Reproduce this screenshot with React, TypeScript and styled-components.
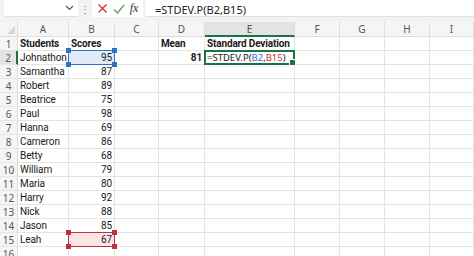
import React from "react";
import styled, { createGlobalStyle, css } from "styled-components";

const Global = createGlobalStyle`
  html, body { margin: 0; padding: 0; background: #ffffff; }
  body { font-family: "Noto Sans", "Open Sans", sans-serif; overflow: hidden; }
`;

const Page = styled.div`
  width: 474px;
  height: 256px;
  overflow: hidden;
  background: #ffffff;
`;

const FormulaBar = styled.div`
  display: flex;
  align-items: flex-start;
  height: 22px;
  background: #f3f3f3;
  box-sizing: border-box;
`;

const NameBox = styled.div`
  width: 74px;
  height: 17px;
  margin-left: 4px;
  background: #ffffff;
  border-bottom: 1px solid #e0e0e0;
  box-sizing: border-box;
  display: flex;
  align-items: center;
  justify-content: flex-end;
  padding-right: 4px;
  color: #444;
`;

const Dots = styled.div`
  width: 14px;
  height: 17px;
  display: flex;
  align-items: center;
  justify-content: center;
  color: #777;
  font-size: 10px;
`;

const ActionBox = styled.div`
  width: 51px;
  height: 17px;
  background: #ffffff;
  display: flex;
  align-items: center;
  justify-content: space-around;
  padding: 0 2px;
  box-sizing: border-box;
`;

const Fx = styled.span`
  font-family: "Liberation Serif", serif;
  font-style: italic;
  font-size: 12px;
  color: #333;
`;

const FormulaInput = styled.div`
  flex: 1;
  height: 17px;
  margin-left: 3px;
  background: #ffffff;
  border-bottom: 1px solid #e0e0e0;
  box-sizing: border-box;
  padding-left: 9px;
  line-height: 16px;
  color: #222;
`;

const FormulaText = styled.span<{ $size: number }>`
  font-family: "Noto Sans", sans-serif;
  font-size: ${({ $size }) => $size}px;
  font-weight: 400;
  letter-spacing: 0;
`;

const Sheet = styled.div`
  display: grid;
  grid-template-columns: 18px 51px 46px 44px 46px 90px 45px 45px 45px 44px;
  grid-auto-rows: 14px;
  grid-template-rows: 15px;
`;

const ColHead = styled.div<{ $active?: boolean }>`
  background: ${({ $active }) => ($active ? "#e3e3e3" : "#f5f5f5")};
  border-right: 1px solid #dddddd;
  border-bottom: ${({ $active }) => ($active ? "2px solid #1e7145" : "1px solid #dddddd")};
  box-sizing: border-box;
  display: flex;
  align-items: center;
  justify-content: center;
  font-size: 10px;
  color: #555;
`;

const Corner = styled.div`
  background: #f5f5f5;
  border-right: 1px solid #dddddd;
  border-bottom: 1px solid #dddddd;
  box-sizing: border-box;
  position: relative;
  &::after {
    content: "";
    position: absolute;
    right: 2px;
    bottom: 2px;
    border-left: 8px solid transparent;
    border-bottom: 8px solid #d6d6d6;
  }
`;

const RowHead = styled.div<{ $active?: boolean }>`
  background: ${({ $active }) => ($active ? "#e3e3e3" : "#f5f5f5")};
  border-right: ${({ $active }) => ($active ? "2px solid #1e7145" : "1px solid #dddddd")};
  border-bottom: 1px solid #e6e6e6;
  box-sizing: border-box;
  display: flex;
  align-items: center;
  justify-content: center;
  font-size: 10px;
  color: #555;
`;

type Mark = "blue" | "red" | "green" | undefined;

const markColor = { blue: "#2f72c4", red: "#c0303c", green: "#1e7145" };
const markFill = { blue: "#e2ecf8", red: "#fbe5e6", green: "#ffffff" };

const Cell = styled.div<{ $right?: boolean; $bold?: boolean; $mark?: Mark }>`
  position: relative;
  border-right: 1px solid #e4e4e4;
  border-bottom: 1px solid #e4e4e4;
  box-sizing: border-box;
  padding: 0 2px;
  font-family: Roboto, "Noto Sans", sans-serif;
  font-size: 10px;
  line-height: 13px;
  color: #1a1a1a;
  white-space: nowrap;
  text-align: ${({ $right }) => ($right ? "right" : "left")};
  font-weight: ${({ $bold }) => ($bold ? 700 : 400)};
  letter-spacing: ${({ $bold }) => ($bold ? "-0.15px" : "-0.1px")};
  ${({ $mark }) =>
    $mark &&
    css`
      background: ${markFill[$mark]};
      z-index: 1;
    `}
`;

const Outline = styled.div<{ $mark: "blue" | "red" | "green" }>`
  position: absolute;
  left: -1px;
  top: -1px;
  right: -1px;
  bottom: -1px;
  border: ${({ $mark }) => ($mark === "green" ? 2 : 1)}px solid ${({ $mark }) => markColor[$mark]};
  pointer-events: none;
`;

const Handle = styled.span<{ $mark: "blue" | "red" | "green"; $x: "l" | "r"; $y: "t" | "b" }>`
  position: absolute;
  width: 5px;
  height: 5px;
  background: ${({ $mark }) => markColor[$mark]};
  ${({ $x }) => ($x === "l" ? "left: -3px;" : "right: -3px;")}
  ${({ $y }) => ($y === "t" ? "top: -3px;" : "bottom: -3px;")}
  ${({ $mark }) => ($mark === "green" ? "border: 1px solid #fff;" : "")}
`;

const Ref = styled.span<{ $c: string }>`
  color: ${({ $c }) => $c};
`;

const columns = ["A", "B", "C", "D", "E", "F", "G", "H", "I"];

const students: [string, number][] = [
  ["Johnathon", 95],
  ["Samantha", 87],
  ["Robert", 89],
  ["Beatrice", 75],
  ["Paul", 98],
  ["Hanna", 69],
  ["Cameron", 86],
  ["Betty", 68],
  ["William", 79],
  ["Maria", 80],
  ["Harry", 92],
  ["Nick", 88],
  ["Jason", 85],
  ["Leah", 67],
];

const Formula = () => (
  <FormulaText $size={9.5}>
    =STDEV.P(<Ref $c="#2f72c4">B2</Ref>,<Ref $c="#c0303c">B15</Ref>)
  </FormulaText>
);

const Marked = ({ mark }: { mark: "blue" | "red" | "green" }) => (
  <Outline $mark={mark}>
    {mark === "green" ? (
      <Handle $mark={mark} $x="r" $y="b" />
    ) : (
      <>
        <Handle $mark={mark} $x="l" $y="t" />
        <Handle $mark={mark} $x="r" $y="t" />
        <Handle $mark={mark} $x="l" $y="b" />
        <Handle $mark={mark} $x="r" $y="b" />
      </>
    )}
  </Outline>
);

const renderRow = (r: number) => {
  const cells: React.ReactNode[] = [];
  const s = students[r - 2];
  cells.push(
    <RowHead key={`h${r}`} $active={r === 2}>
      {r}
    </RowHead>
  );
  for (let c = 0; c < 9; c++) {
    let content: React.ReactNode = null;
    let bold = false;
    let right = false;
    let mark: Mark;
    if (r === 1) {
      bold = true;
      if (c === 0) content = "Students";
      if (c === 1) content = "Scores";
      if (c === 3) content = "Mean";
      if (c === 4) content = "Standard Deviation";
    } else if (s) {
      if (c === 0) content = s[0];
      if (c === 1) {
        content = s[1];
        right = true;
        if (r === 2) mark = "blue";
        if (r === 15) mark = "red";
      }
      if (r === 2 && c === 3) {
        content = "81";
        bold = true;
        right = true;
      }
      if (r === 2 && c === 4) {
        content = <Formula />;
        mark = "green";
      }
    }
    cells.push(
      <Cell key={`${r}-${c}`} $bold={bold} $right={right} $mark={mark}>
        {content}
        {mark && <Marked mark={mark} />}
      </Cell>
    );
  }
  return cells;
};

export default function App() {
  return (
    <Page>
      <Global />
      <FormulaBar>
        <NameBox>
          <svg width="9" height="6" viewBox="0 0 9 6">
            <path d="M1 1l3.5 3.5L8 1" fill="none" stroke="#555" strokeWidth="1.2" />
          </svg>
        </NameBox>
        <Dots>⋮</Dots>
        <ActionBox>
          <svg width="11" height="11" viewBox="0 0 11 11">
            <path d="M1.5 1.5l8 8M9.5 1.5l-8 8" stroke="#d13438" strokeWidth="1.3" />
          </svg>
          <svg width="12" height="10" viewBox="0 0 12 10">
            <path d="M1 5.5l3.5 3.5L11 1" fill="none" stroke="#54a35d" strokeWidth="1.3" />
          </svg>
          <Fx>fx</Fx>
        </ActionBox>
        <FormulaInput>
          <FormulaText $size={11}>=STDEV.P(B2,B15)</FormulaText>
        </FormulaInput>
      </FormulaBar>
      <Sheet>
        <Corner />
        {columns.map((c) => (
          <ColHead key={c} $active={c === "E"}>
            {c}
          </ColHead>
        ))}
        {Array.from({ length: 16 }, (_, i) => renderRow(i + 1))}
      </Sheet>
    </Page>
  );
}
